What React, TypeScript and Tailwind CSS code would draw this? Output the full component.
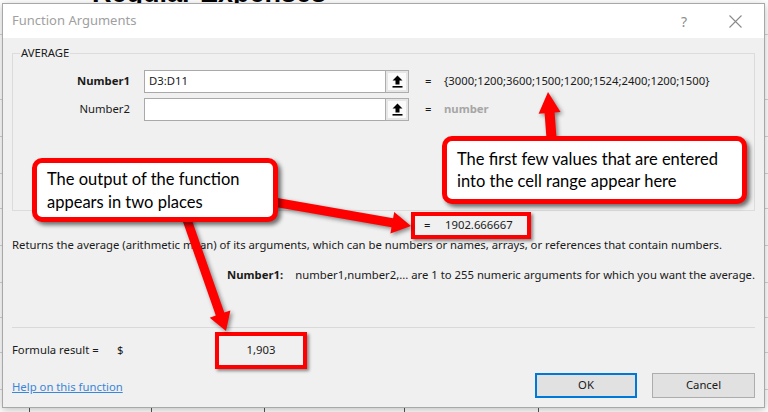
import React from "react";

const RED = "#ff0000";

type Pt = [number, number];

// polygon for a straight block arrow from (x1,y1) to the tip (x2,y2)
function arrow(from: Pt, to: Pt, stem: number, head: number, headLen: number) {
  const [x1, y1] = from;
  const [x2, y2] = to;
  const len = Math.hypot(x2 - x1, y2 - y1);
  const ux = (x2 - x1) / len;
  const uy = (y2 - y1) / len;
  const px = -uy;
  const py = ux;
  const bx = x2 - ux * headLen;
  const by = y2 - uy * headLen;
  const s = stem / 2;
  const h = head / 2;
  const pts: Pt[] = [
    [x1 + px * s, y1 + py * s],
    [bx + px * s, by + py * s],
    [bx + px * h, by + py * h],
    [x2, y2],
    [bx - px * h, by - py * h],
    [bx - px * s, by - py * s],
    [x1 - px * s, y1 - py * s],
  ];
  return pts.map((p) => p.map((n) => n.toFixed(1)).join(",")).join(" ");
}

const UploadButton = () => (
  <div className="w-[24px] h-[23px] border border-[#adadad] bg-[#e6e6e6] p-[2px]">
    <div className="w-full h-full bg-[#fafafa] flex items-center justify-center">
      <svg width="11" height="13" viewBox="0 0 11 13">
        <polygon points="5.5,0.5 10.5,5.5 7.5,5.5 7.5,9.5 3.5,9.5 3.5,5.5 0.5,5.5" fill="#000" />
        <rect x="0.5" y="11" width="10" height="1.6" fill="#000" />
      </svg>
    </div>
  </div>
);

const ArgRow = ({
  label,
  bold,
  value,
  result,
  muted,
  className,
}: {
  label: string;
  bold?: boolean;
  value: string;
  result: string;
  muted?: boolean;
  className?: string;
}) => (
  <div className={`flex items-center h-[23px] ${className ?? ""}`}>
    <div className={`w-[117px] text-right ${bold ? "font-bold" : ""}`}>{label}</div>
    <div className="ml-[14px] w-[241px] h-[23px] border border-[#a9a9a9] border-r-0 bg-white flex items-center pl-[4px]">
      {value}
    </div>
    <UploadButton />
    <div className="ml-[16px] w-[19px]">=</div>
    <div className={muted ? "font-bold text-[#a6a6a6]" : ""}>{result}</div>
  </div>
);

const rows = [35, 65, 37, 37, 35, 37, 37, 35, 35, 37, 40];

export default function App() {
  return (
    <div className="relative w-[768px] h-[412px] overflow-hidden bg-white font-['Noto_Sans',sans-serif] text-[11.3px] text-[#1a1a1a]">
      {/* spreadsheet behind the dialog */}
      <div className="absolute inset-0 flex flex-col">
        {rows.map((h, i) => (
          <div key={i} className="border-b border-[#d4d4d4] shrink-0" style={{ height: h }} />
        ))}
      </div>
      <div className="absolute left-[92px] top-[-20px] font-['Liberation_Sans',sans-serif] text-[27px] leading-none font-bold text-black whitespace-nowrap">
        Regular Expenses
      </div>
      <div className="absolute left-0 top-[403px] flex text-[22px] text-black whitespace-nowrap">
        <div className="w-[30px] border-r border-[#555] h-[40px]" />
        <div className="w-[122px] border-r border-[#555] flex gap-[40px] pl-[8px]">
          <span>$</span>
          <span>123</span>
        </div>
        <div className="w-[113px] border-r border-[#555]" />
        <div className="w-[140px] border-r border-[#555] flex gap-[50px] pl-[14px]">
          <span>$</span>
          <span>1,300</span>
        </div>
        <div className="w-[134px] border-r border-[#555] flex gap-[40px] pl-[10px]">
          <span>$</span>
          <span>1,330</span>
        </div>
        <div className="pl-[44px]">-3.7%</div>
      </div>

      {/* dialog window */}
      <div className="absolute left-[2px] top-[3px] w-[763px] h-[405px] border border-[#a8a8a8] bg-[#f0f0f0] flex flex-col shadow-[0_2px_8px_rgba(0,0,0,0.25)]">
        <div className="h-[34px] shrink-0 bg-white flex items-center pl-[9px] pr-[22px]">
          <span className="text-[13px] text-[#a0a0a0]">Function Arguments</span>
          <span className="ml-auto text-[14px] text-[#8c8c8c]">?</span>
          <svg className="ml-[42px]" width="13" height="13" viewBox="0 0 13 13">
            <path d="M0.5 0.5 L12.5 12.5 M12.5 0.5 L0.5 12.5" stroke="#8a8a8a" strokeWidth="1.1" />
          </svg>
        </div>

        <div className="flex-1 flex flex-col px-[9px] pt-[8px] pb-[9px]">
          <fieldset className="border border-[#dcdcdc] h-[165px]">
            <legend className="ml-[7px] px-[1px] leading-[14px]">AVERAGE</legend>
            <ArgRow
              className="mt-[10px]"
              label="Number1"
              bold
              value="D3:D11"
              result="{3000;1200;3600;1500;1200;1524;2400;1200;1500}"
            />
            <ArgRow className="mt-[5px]" label="Number2" value="" result="number" muted />
          </fieldset>

          <div className="mt-[1px] ml-[399px] w-[120px] h-[27px] border-[4px] border-[#ff0000] flex items-center pl-[9px] shadow-[2px_2px_3px_rgba(0,0,0,0.45)]">
            <span className="w-[21px]">=</span>
            <span>1902.666667</span>
          </div>

          <div className="leading-[12px] whitespace-nowrap">
            Returns the average (arithmetic mean) of its arguments, which can be numbers or names, arrays, or
            references that contain numbers.
          </div>

          <div className="mt-[16px] flex leading-[16px] whitespace-nowrap pl-[215px]">
            <span className="w-[69px] font-bold">Number1:</span>
            <span>number1,number2,... are 1 to 255 numeric arguments for which you want the average.</span>
          </div>

          <div className="mt-[44px] border-t border-[#d9d9d9]" />

          <div className="mt-[4px] flex items-center">
            <span className="w-[105px]">Formula result =</span>
            <span className="w-[98px]">$</span>
            <div className="w-[92px] h-[37px] border-[4px] border-[#ff0000] flex items-center justify-center shadow-[2px_2px_3px_rgba(0,0,0,0.45)]">
              1,903
            </div>
          </div>

          <div className="mt-[4px] flex items-center h-[25px]">
            <a className="pt-[3px] text-[#3a86d9] underline">Help on this function</a>
            <button className="ml-auto w-[102px] h-[25px] border-2 border-[#0078d7] bg-[#e1e1e1]">OK</button>
            <button className="ml-[15px] w-[103px] h-[25px] border border-[#adadad] bg-[#e1e1e1]">Cancel</button>
          </div>
        </div>
      </div>

      {/* annotation arrows */}
      <svg
        className="absolute inset-0 drop-shadow-[2px_2px_2px_rgba(0,0,0,0.45)]"
        width="768"
        height="412"
        viewBox="0 0 768 412"
      >
        <polygon points={arrow([552, 145], [548, 92], 10, 22, 21)} fill={RED} />
        <polygon points={arrow([268, 201], [411, 226], 9, 22, 19)} fill={RED} />
        <polygon points={arrow([185, 214], [226, 331], 9, 22, 18)} fill={RED} />
      </svg>

      {/* callouts */}
      <div className="absolute left-[442px] top-[136px] w-[305px] h-[68px] border-[5px] border-[#ff0000] rounded-[10px] bg-white pl-[10px] pt-[7px] font-['Lato',sans-serif] text-[16.5px] leading-[22px] text-black shadow-[3px_3px_4px_rgba(0,0,0,0.55)]">
        The first few values that are entered
        <br />
        into the cell range appear here
      </div>
      <div className="absolute left-[32px] top-[158px] w-[246px] h-[64px] border-[5px] border-[#ff0000] rounded-[10px] bg-white pl-[10px] pt-[5px] font-['Lato',sans-serif] text-[16.5px] leading-[23px] text-black shadow-[3px_3px_4px_rgba(0,0,0,0.55)]">
        The output of the function
        <br />
        appears in two places
      </div>
    </div>
  );
}
